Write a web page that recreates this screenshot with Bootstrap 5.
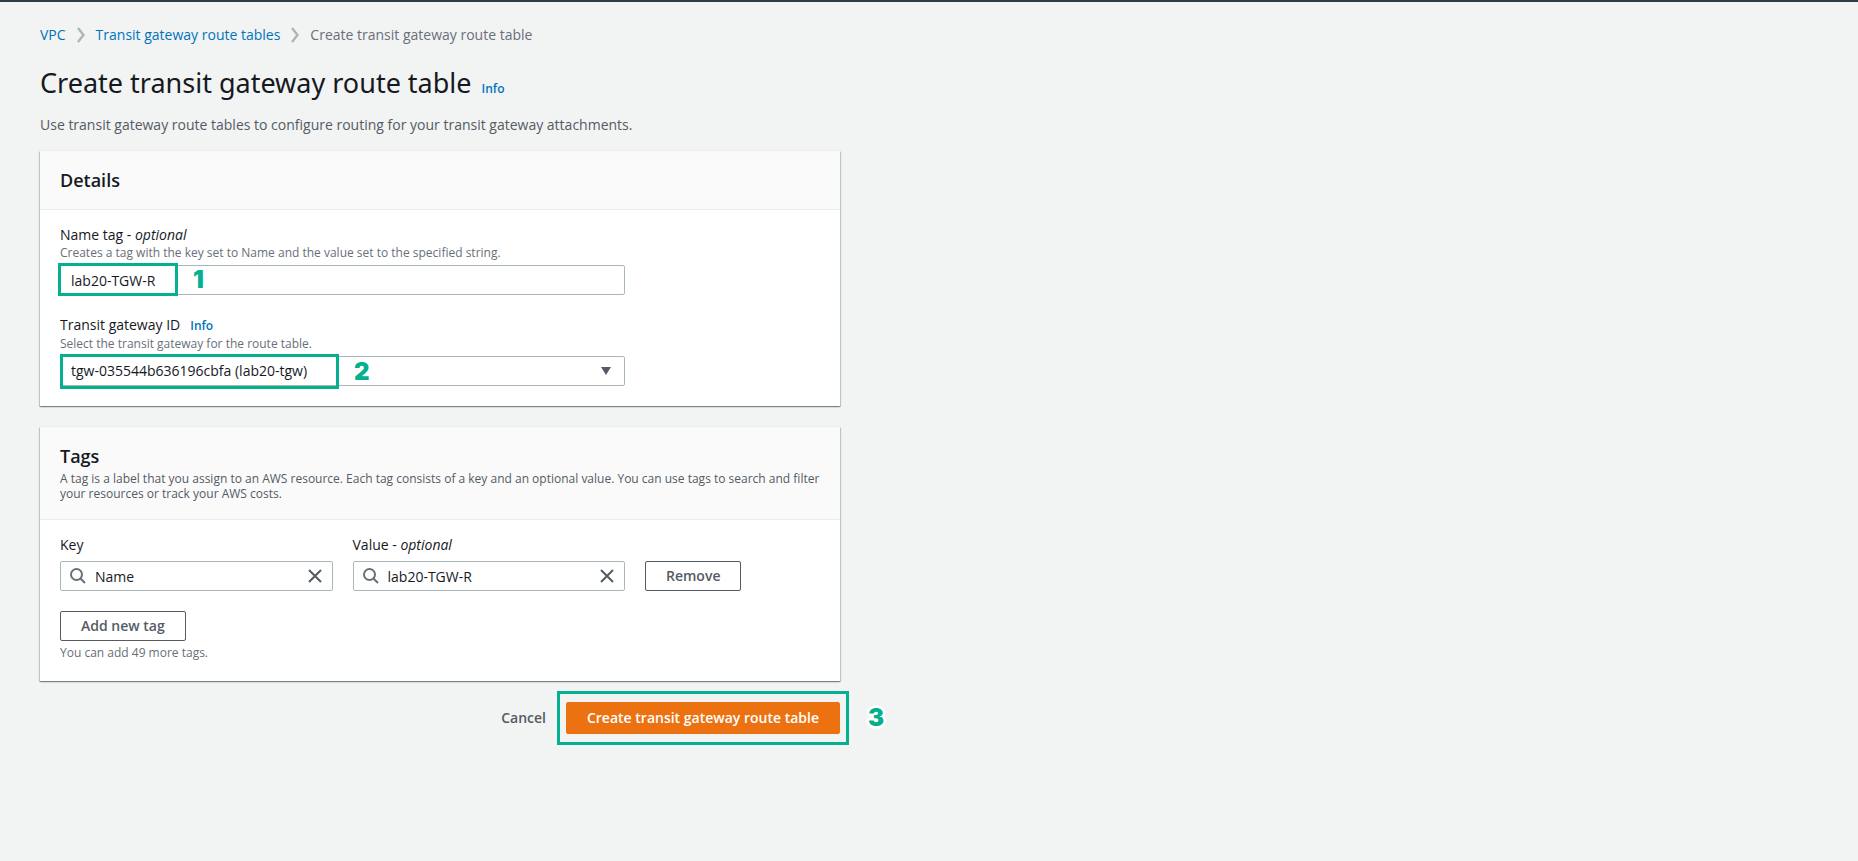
<!DOCTYPE html>
<html lang="en">
<head>
<meta charset="utf-8">
<meta name="viewport" content="width=device-width, initial-scale=1">
<title>Create transit gateway route table</title>
<link href="https://cdn.jsdelivr.net/npm/bootstrap@5.3.0/dist/css/bootstrap.min.css" rel="stylesheet">
<style>
  :root { --ink: #16191f; --muted: #687078; --slate: #545b64; --line: #aab7b8; --blue: #0073bb; --mark: #04b08f; }
  body { font-family: "Open Sans", "Noto Sans", sans-serif; font-size: 14px; line-height: 20px; color: var(--ink); background: #f2f3f3; border-top: 2px solid #2f3a48; min-height: 100vh; }
  a { color: var(--blue); text-decoration: none; }
  .page-main { max-width: 880px; padding: 23px 40px 40px; }
  .crumbs { --bs-breadcrumb-margin-bottom: 20px; gap: 11px; align-items: center; font-size: 14px; }
  .crumbs svg { width: 8px; height: 16px; }
  .crumbs .active { color: var(--muted); }
  .page-title { font-family: "Noto Sans", sans-serif; font-size: 27px; line-height: 36px; font-weight: 400; }
  .title-row, .label-row { column-gap: 10px; }
  .info-link { font-size: 12px; font-weight: 600; }
  .lead-text { color: var(--slate); margin: 14px 0 16px; }
  .panel { border: 0; border-radius: 0; color: var(--ink); box-shadow: 0 1px 1px 0 rgba(0,28,36,.3), 1px 1px 1px 0 rgba(0,28,36,.15), -1px 1px 1px 0 rgba(0,28,36,.15), 0 0 0 1px #eaeded; margin-bottom: 21px; }
  .panel-head { background: #fafafa; border-bottom: 1px solid #eaeded; padding: 18px 20px; }
  .panel-head h2 { font-size: 18px; line-height: 22px; font-weight: 600; margin: 0; }
  .panel-head p { font-size: 12px; line-height: 15px; color: var(--slate); margin: 4px 0 0; }
  .panel-body { padding: 15px 20px 20px; }
  .field-row { --bs-gutter-x: 20px; }
  .col-wide { flex: 0 0 75%; }
  .col-tag { flex: 0 0 37.5%; }
  .form-label { display: block; margin: 0; }
  .tag-label { margin-bottom: 6px; }
  .gateway-field, .add-tag { margin-top: 20px; }
  .hint { font-size: 12px; line-height: 16px; color: var(--muted); }
  .form-control, .form-select { height: 30px; font-size: 14px; line-height: 20px; padding: 4px 10px; border: 1px solid var(--line); border-radius: 2px; color: var(--ink); }
  .form-select { background: #fff url("data:image/svg+xml,%3Csvg xmlns='http://www.w3.org/2000/svg' viewBox='0 0 10 8'%3E%3Cpath fill='%23545b64' d='M0 0h10L5 8z'/%3E%3C/svg%3E") no-repeat right 13px center / 10px 8px; }
  .search-box .form-control { padding-left: 34px; padding-right: 34px; }
  .search-box .glass { position: absolute; left: 10px; top: 7px; width: 16px; height: 16px; }
  .search-box .wipe { position: absolute; right: 10px; top: 7px; width: 16px; height: 16px; padding: 0; border: 0; background: none; display: flex; }
  .btn { font-size: 14px; line-height: 20px; font-weight: 600; padding: 4px 20px; border-radius: 2px; }
  .btn-plain { color: var(--slate); background: #fff; border: 1px solid var(--slate); }
  .btn-cancel { color: var(--slate); border: 0; }
  .btn-create { color: #fff; background: #ec7211; border: 1px solid #ec7211; padding: 5px 20px; }
  .frame { position: absolute; border: 3px solid var(--mark); pointer-events: none; }
  .frame-name { left: -2px; top: -2px; width: 120px; height: 33px; }
  .frame-gateway { left: 0; top: -2px; width: 279px; height: 35px; }
  .frame-create { inset: -11px -9px; }
  .step { position: absolute; left: 100%; top: 50%; margin: -14px 0 0 18px; font-family: Inter, "Open Sans", sans-serif; font-size: 24px; line-height: 28px; font-weight: 900; color: var(--mark); }
  .step-halo { margin-left: 22px; text-shadow: 2px 0 #fff, -2px 0 #fff, 0 2px #fff, 0 -2px #fff, 2px 2px #fff, -2px -2px #fff, 2px -2px #fff, -2px 2px #fff, 3px 0 1px #fff, -3px 0 1px #fff, 0 3px 1px #fff, 0 -3px 1px #fff; }
</style>
</head>
<body>
<main class="page-main">
  <nav aria-label="breadcrumb">
    <ol class="breadcrumb crumbs">
      <li><a href="#">VPC</a></li>
      <li class="d-flex" aria-hidden="true"><svg viewBox="0 0 8 16" fill="none" stroke="#aab7b8" stroke-width="2.400"><path d="M1 1l5.500 7L1 15"/></svg></li>
      <li><a href="#">Transit gateway route tables</a></li>
      <li class="d-flex" aria-hidden="true"><svg viewBox="0 0 8 16" fill="none" stroke="#aab7b8" stroke-width="2.400"><path d="M1 1l5.500 7L1 15"/></svg></li>
      <li class="active" aria-current="page">Create transit gateway route table</li>
    </ol>
  </nav>
  <div class="d-flex align-items-baseline title-row">
    <h1 class="page-title m-0">Create transit gateway route table</h1>
    <a class="info-link" href="#">Info</a>
  </div>
  <p class="lead-text">Use transit gateway route tables to configure routing for your transit gateway attachments.</p>

  <form>
    <section class="card panel">
      <div class="panel-head"><h2>Details</h2></div>
      <div class="panel-body">
        <div class="row field-row">
          <div class="col-wide">
            <label class="form-label" for="nameTag">Name tag - <i>optional</i></label>
            <div class="hint mb-1">Creates a tag with the key set to Name and the value set to the specified string.</div>
            <div class="position-relative">
              <input class="form-control" id="nameTag" type="text" value="lab20-TGW-R">
              <div class="frame frame-name"><span class="step">1</span></div>
            </div>
            <div class="gateway-field">
              <div class="d-flex align-items-baseline label-row">
                <label class="form-label" for="gateway">Transit gateway ID</label>
                <a class="info-link" href="#">Info</a>
              </div>
              <div class="hint mb-1">Select the transit gateway for the route table.</div>
              <div class="position-relative">
                <select class="form-select" id="gateway"><option>tgw-035544b636196cbfa (lab20-tgw)</option></select>
                <div class="frame frame-gateway"><span class="step">2</span></div>
              </div>
            </div>
          </div>
        </div>
      </div>
    </section>

    <section class="card panel">
      <div class="panel-head">
        <h2>Tags</h2>
        <p>A tag is a label that you assign to an AWS resource. Each tag consists of a key and an optional value. You can use tags to search and filter your resources or track your AWS costs.</p>
      </div>
      <div class="panel-body">
        <div class="row field-row align-items-end">
          <div class="col-tag">
            <label class="form-label tag-label" for="tagKey">Key</label>
            <div class="position-relative search-box">
              <svg class="glass" viewBox="0 0 16 16" fill="none" stroke="#687078" stroke-width="2"><circle cx="6.500" cy="6.500" r="5.500"/><path d="M10.200 10.200L15 15"/></svg>
              <input class="form-control" id="tagKey" type="text" value="Name">
              <button class="wipe" type="button" aria-label="Clear key"><svg viewBox="0 0 16 16" fill="none" stroke="#545b64" stroke-width="2"><path d="M2 2l12 12M14 2L2 14"/></svg></button>
            </div>
          </div>
          <div class="col-tag">
            <label class="form-label tag-label" for="tagValue">Value - <i>optional</i></label>
            <div class="position-relative search-box">
              <svg class="glass" viewBox="0 0 16 16" fill="none" stroke="#687078" stroke-width="2"><circle cx="6.500" cy="6.500" r="5.500"/><path d="M10.200 10.200L15 15"/></svg>
              <input class="form-control" id="tagValue" type="text" value="lab20-TGW-R">
              <button class="wipe" type="button" aria-label="Clear value"><svg viewBox="0 0 16 16" fill="none" stroke="#545b64" stroke-width="2"><path d="M2 2l12 12M14 2L2 14"/></svg></button>
            </div>
          </div>
          <div class="col-auto"><button class="btn btn-plain" type="button">Remove</button></div>
        </div>
        <button class="btn btn-plain add-tag" type="button">Add new tag</button>
        <div class="hint mt-1">You can add 49 more tags.</div>
      </div>
    </section>

    <div class="d-flex justify-content-end align-items-center">
      <button class="btn btn-cancel" type="button">Cancel</button>
      <div class="position-relative">
        <button class="btn btn-create" type="submit">Create transit gateway route table</button>
        <div class="frame frame-create"><span class="step step-halo">3</span></div>
      </div>
    </div>
  </form>
</main>
<script src="https://cdn.jsdelivr.net/npm/bootstrap@5.3.0/dist/js/bootstrap.bundle.min.js"></script>
</body>
</html>
